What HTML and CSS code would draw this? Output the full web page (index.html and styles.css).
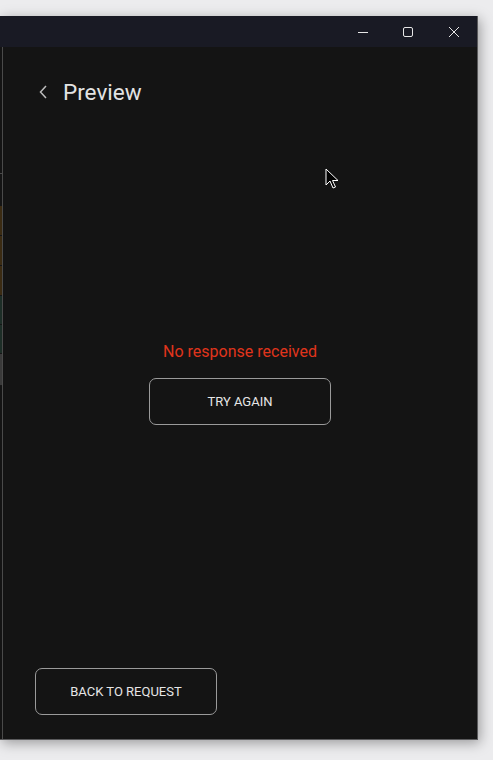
FILE: index.html
```html
<!DOCTYPE html>
<html>
	<head>
		<meta charset="utf-8">
		<title>Preview</title>
		<link rel="stylesheet" href="styles.css">
	</head>
	<body>

		<div class="windowNode">
			<!-- title bar -->
			<div class="titleBar">
				<div class="winBtn">
					<svg width="12" height="12" viewBox="0 0 12 12"><path d="M1 6.5h10" stroke="#e6e6e6" stroke-width="1"/></svg>
				</div>
				<div class="winBtn">
					<svg width="12" height="12" viewBox="0 0 12 12"><rect x="1.5" y="1.5" width="9" height="9" rx="1.5" fill="none" stroke="#e6e6e6" stroke-width="1"/></svg>
				</div>
				<div class="winBtn">
					<svg width="12" height="12" viewBox="0 0 12 12"><path d="M1 1l10 10M11 1L1 11" stroke="#e6e6e6" stroke-width="1"/></svg>
				</div>
			</div>

			<div class="bodyNode">
				<div class="sideStrip">
					<div class="s_gap"></div>
					<div class="s_item s_brown"></div>
					<div class="s_item s_brown"></div>
					<div class="s_item s_brown"></div>
					<div class="s_item s_green"></div>
					<div class="s_item s_green"></div>
					<div class="s_item s_gray"></div>
				</div>

				<div class="mainNode">
					<div class="headNode">
						<svg class="backIcon" width="12" height="16" viewBox="0 0 12 16"><path d="M7 2L1.5 8l5.5 6" fill="none" stroke="#bdbdbd" stroke-width="1.5"/></svg>
						<span class="headTitle">Preview</span>
					</div>

					<div class="centerNode">
						<p class="errText">No response received</p>
						<div class="btnNode">TRY AGAIN</div>
					</div>

					<div class="footNode">
						<div class="btnNode">BACK TO REQUEST</div>
					</div>
				</div>
			</div>
		</div>

		<!-- mouse pointer -->
		<svg class="cursorNode" width="14" height="22" viewBox="0 0 14 22">
			<path d="M1 1v16l4-4 3 7 2.5-1-3-6.5h5.5z" fill="#000" stroke="#fff" stroke-width="1"/>
		</svg>
	</body>
</html>
```

FILE: styles.css
```css
* {
	margin: 0;
	padding: 0;
	box-sizing: border-box;
}

body {
	width: 493px;
	height: 760px;
	background: #ececee;
	font-family: Roboto, "Liberation Sans", sans-serif;
	overflow: hidden;
}

.windowNode {
	width: 478px;
	height: 724px;
	margin-top: 16px;
	background: #141414;
	display: flex;
	flex-direction: column;
	box-shadow: 2px 3px 12px rgba(0, 0, 0, 0.35);
	border-right: 1px solid #5a5a5c;
	border-bottom: 1px solid #5a5a5c;
}

.titleBar {
	height: 31px;
	background: #191a24;
	display: flex;
	justify-content: flex-end;
}

.titleBar .winBtn {
	width: 46px;
	height: 31px;
	display: flex;
	align-items: center;
	justify-content: center;
}

.titleBar .winBtn:first-child {
	margin-right: -1px;
}

.bodyNode {
	flex: 1;
	display: flex;
}

.sideStrip {
	width: 3px;
	border-right: 1px solid #4a4a4a;
	display: flex;
	flex-direction: column;
}

.sideStrip .s_gap {
	height: 127px;
	border-bottom: 1px solid #4a4a4a;
}

.sideStrip .s_gap + .s_item {
	margin-top: 32px;
}

.sideStrip .s_item {
	height: 30px;
	border-bottom: 1px solid #161616;
}

.sideStrip .s_brown {
	background: #3b2b12;
}

.sideStrip .s_green {
	height: 29px;
	background: #1d2e27;
}

.sideStrip .s_gray {
	height: 32px;
	background: #3a3a3a;
}

.mainNode {
	flex: 1;
	display: flex;
	flex-direction: column;
	padding: 29px 32px 24px;
}

.headNode {
	height: 32px;
	display: flex;
	align-items: center;
}

.headNode .backIcon {
	margin: 0 12px 0 4px;
}

.headNode .headTitle {
	font-size: 22.5px;
	color: #e3e3e3;
	line-height: 32px;
}

.centerNode {
	flex: 1;
	display: flex;
	flex-direction: column;
	align-items: center;
	justify-content: center;
	padding-bottom: 9px;
}

.errText {
	font-size: 16px;
	line-height: 20px;
	color: #e0341c;
	margin-bottom: 16px;
}

.btnNode {
	width: 182px;
	height: 47px;
	border: 1px solid #9a9a9a;
	border-radius: 7px;
	display: flex;
	align-items: center;
	justify-content: center;
	font-size: 13px;
	color: #e6e6e6;
}

.footNode {
	display: flex;
}

.cursorNode {
	position: absolute;
	left: 325px;
	top: 168px;
}
```
